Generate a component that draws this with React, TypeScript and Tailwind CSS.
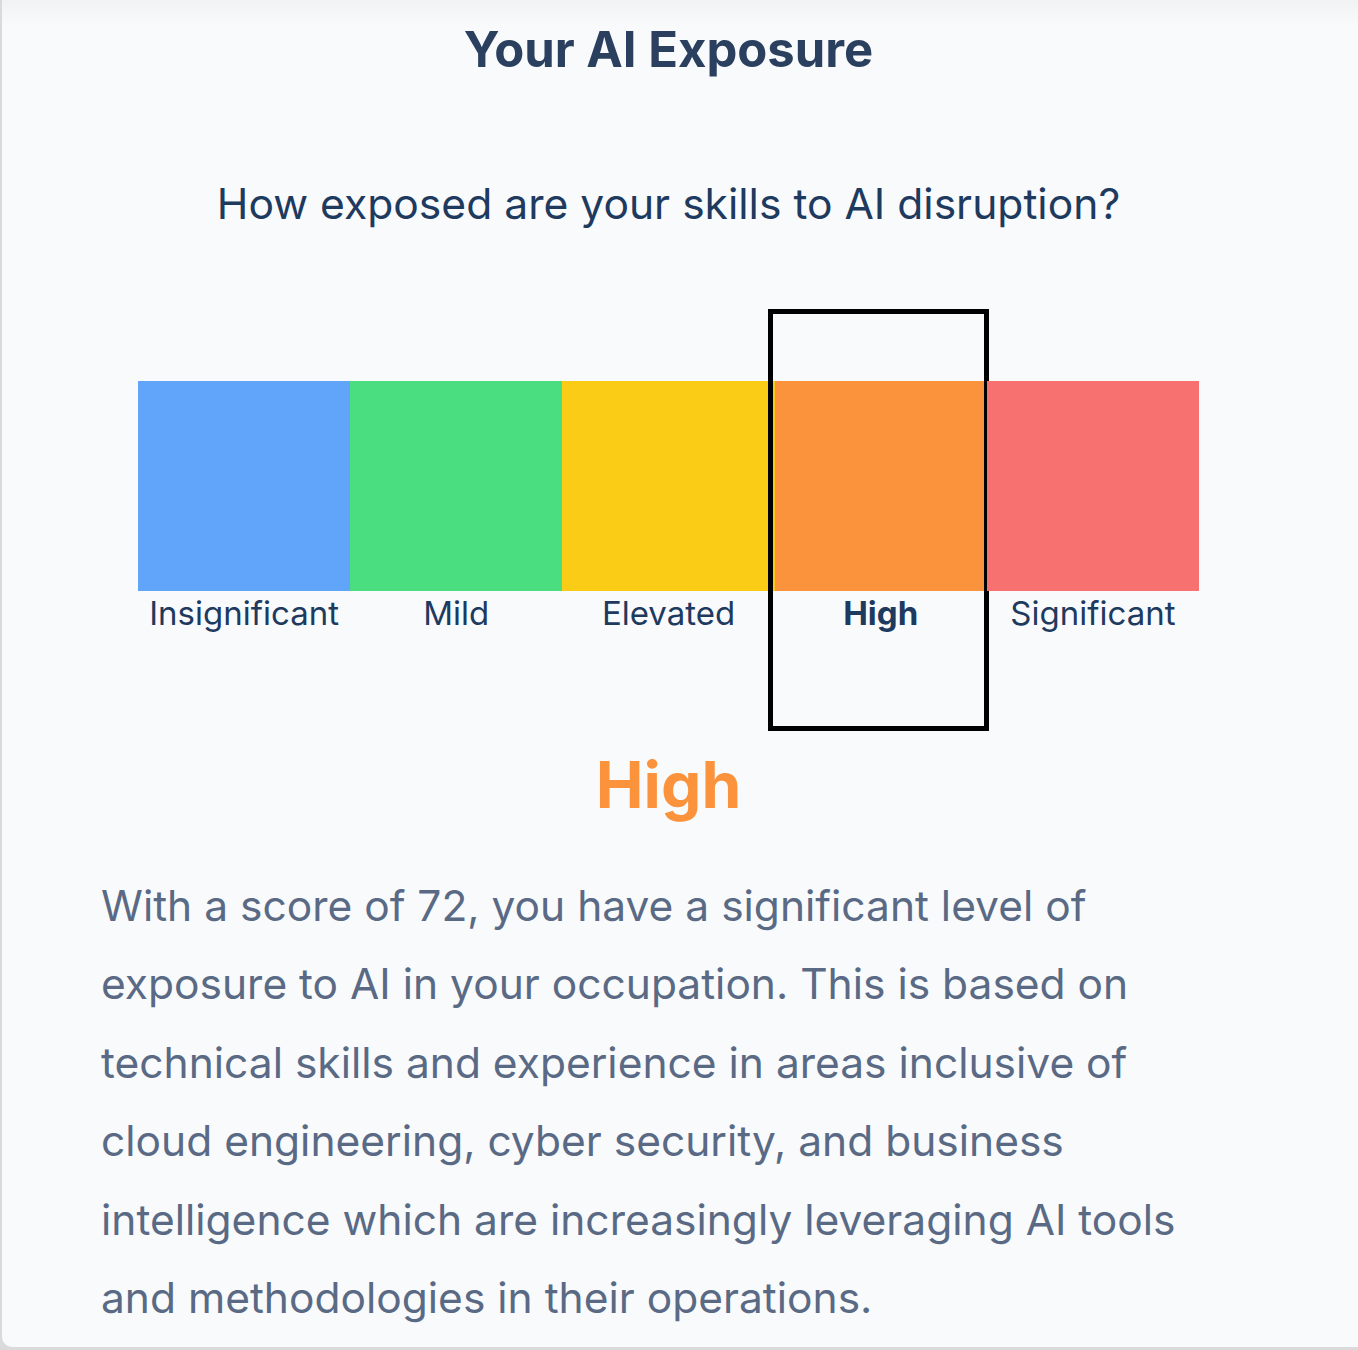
const levels = [
  { label: 'Insignificant', color: 'bg-[#60a5fa]' },
  { label: 'Mild', color: 'bg-[#4ade80]' },
  { label: 'Elevated', color: 'bg-[#facc15]' },
  { label: 'High', color: 'bg-[#fb923c]' },
  { label: 'Significant', color: 'bg-[#f87171]' },
]

const current = 'High'

function ExposureScale() {
  return (
    <div className="mx-auto mt-[152px] flex w-[1061px]">
      {levels.map((level) => {
        const active = level.label === current
        return (
          <div key={level.label} className="flex flex-1 flex-col">
            <div className={`relative h-[210px] ${level.color}`}>
              {active && (
                <div className="absolute -top-[72px] -bottom-[140px] -left-[7px] -right-[2px] border-[5px] border-black" />
              )}
            </div>
            <p
              className={`h-[44px] whitespace-nowrap text-center text-[33px] leading-[44px] text-[#1e3a5f] ${
                active ? 'font-bold' : 'font-normal'
              }`}
            >
              {level.label}
            </p>
          </div>
        )
      })}
    </div>
  )
}

export default function App() {
  return (
    <div className="min-h-[1350px] bg-[#dadada] pl-[2px] font-['Inter','Liberation_Sans',sans-serif]">
      <div className="h-[1347px] overflow-hidden rounded-bl-[10px] bg-[#f8fafc] bg-gradient-to-b from-[#f1f2f4] from-0% to-[#f8fafc] to-[2%]">
        <div className="w-[1333px]">
          <h1 className="pt-[20px] text-center text-[49px] font-bold leading-[60px] text-[#2b3f5f]">
            Your AI Exposure
          </h1>

          <p className="mt-[99px] text-center text-[42.6px] leading-[50px] text-[#1e3a5f]">
            How exposed are your skills to AI disruption?
          </p>

          <ExposureScale />

          <p className="mt-[110px] text-center text-[64px] font-bold leading-[80px] text-[#fb923c]">
            {current}
          </p>

          <p className="mt-[42px] ml-[99px] w-[1110px] text-[42.5px] leading-[78.4px] text-[#5a6a85]">
            With a score of 72, you have a significant level of exposure to AI
            in your occupation. This is based on technical skills and experience
            in areas inclusive of cloud engineering, cyber security, and
            business intelligence which are increasingly leveraging AI tools
            and methodologies in their operations.
          </p>
        </div>
      </div>
    </div>
  )
}
